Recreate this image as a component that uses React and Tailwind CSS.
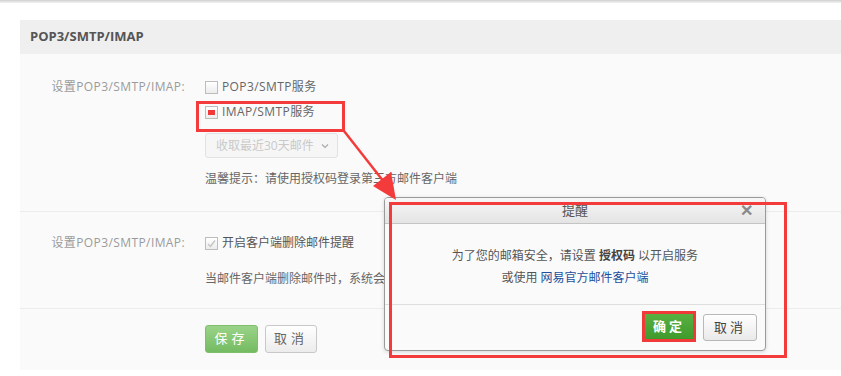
import React from 'react';

function Checkbox({ state }) {
  return (
    <span className="relative inline-flex h-[13px] w-[13px] shrink-0 items-center justify-center border border-[#bdbdbd] bg-gradient-to-b from-[#ffffff] to-[#ececec]">
      {state === 'red' && <span className="h-[5px] w-[7px] bg-[#f03a3a]" />}
      {state === 'check' && (
        <svg width="9" height="9" viewBox="0 0 9 9">
          <path d="M1 5 L3.5 7.5 L8 1.5" fill="none" stroke="#c4c4c4" strokeWidth="1.4" />
        </svg>
      )}
    </span>
  );
}

export default function App() {
  return (
    <div className="relative h-[376px] w-[841px] overflow-hidden bg-white font-['Open_Sans','Noto_Sans_CJK_SC',sans-serif] text-[12px]">
      <div className="h-[3px] bg-gradient-to-b from-[#cfcfcf] to-[#f4f4f4]" />

      {/* panel */}
      <div className="ml-[20px] mt-[17px] bg-[#fafafa]">
        <div className="flex h-[34px] items-center bg-[#efefef] pl-[10px] text-[13px] font-bold text-[#555]">
          POP3/SMTP/IMAP
        </div>

        <div className="flex pb-[22px] pt-[23px]">
          <div className="w-[165px] text-right leading-[20px] tracking-[0.4px] text-[#9a9a9a]">设置POP3/SMTP/IMAP:</div>
          <div className="ml-[20px] flex flex-col">
            <div className="flex h-[20px] items-center gap-[4px] text-[#666]">
              <Checkbox />
              <span className="tracking-[0.4px]">POP3/SMTP服务</span>
            </div>
            <div className="mt-[5px] flex h-[20px] items-center gap-[4px] text-[#666]">
              <Checkbox state="red" />
              <span className="tracking-[0.4px]">IMAP/SMTP服务</span>
            </div>
            <div className="mt-[11px] flex h-[25px] w-[133px] items-center justify-between rounded-[3px] border border-[#e2e2e2] bg-[#f6f6f6] pl-[10px] pr-[8px] text-[#c9c9c9]">
              <span>收取最近30天邮件</span>
              <svg width="8" height="6" viewBox="0 0 8 6">
                <path d="M1 1.5 L4 4.5 L7 1.5" fill="none" stroke="#aaa" strokeWidth="1.2" />
              </svg>
            </div>
            <div className="mt-[11px] leading-[20px] text-[#666]">温馨提示：请使用授权码登录第三方邮件客户端</div>
          </div>
        </div>

        <div className="h-px bg-[#ececec]" />

        <div className="flex pb-[19px] pt-[21px]">
          <div className="w-[165px] text-right leading-[20px] tracking-[0.4px] text-[#9a9a9a]">设置POP3/SMTP/IMAP:</div>
          <div className="ml-[20px] flex flex-col">
            <div className="flex h-[20px] items-center gap-[4px] text-[#555]">
              <Checkbox state="check" />
              <span>开启客户端删除邮件提醒</span>
            </div>
            <div className="mt-[16px] leading-[20px] text-[#666]">当邮件客户端删除邮件时，系统会发送邮件提醒</div>
          </div>
        </div>

        <div className="h-px bg-[#ececec]" />

        <div className="flex gap-[7px] pb-[17px] pl-[185px] pt-[16px]">
          <button className="h-[28px] w-[53px] rounded-[3px] border border-[#7fbf6c] bg-gradient-to-b from-[#9ad388] to-[#74bb62] text-[13px] tracking-[4px] text-white">
            保存
          </button>
          <button className="h-[28px] w-[52px] rounded-[3px] border border-[#c8c8c8] bg-gradient-to-b from-[#ffffff] to-[#ececec] text-[13px] tracking-[4px] text-[#666]">
            取消
          </button>
        </div>
      </div>

      {/* dialog */}
      <div className="absolute left-[384px] top-[197px] flex h-[154px] w-[382px] flex-col overflow-hidden rounded-[4px] border border-[#9a9a9a] bg-[#fafafa] shadow-[0_1px_4px_rgba(0,0,0,0.15)]">
        <div className="relative flex h-[26px] shrink-0 items-center justify-center border-b border-[#c4c4c4] bg-gradient-to-b from-[#f7f7f7] to-[#e4e4e4] text-[13px] text-[#555]">
          提醒
          <span className="absolute right-[12px] top-[4px] text-[16px] font-bold leading-[16px] text-[#8a8a8a]">✕</span>
        </div>
        <div className="flex h-[80px] shrink-0 flex-col items-center justify-center pt-[5px] leading-[22px] text-[#555]">
          <div>
            为了您的邮箱安全，请设置 <b className="font-bold text-[#444]">授权码</b> 以开启服务
          </div>
          <div>
            或使用 <span className="text-[#1d4f9c]">网易官方邮件客户端</span>
          </div>
        </div>
        <div className="h-px bg-[#dedede]" />
        <div className="flex flex-1 items-start justify-end gap-[10px] pr-[8px] pt-[9px]">
          <button className="h-[25px] w-[48px] bg-gradient-to-b from-[#58b040] to-[#3f9a2c] text-[13px] font-bold tracking-[3px] text-white outline outline-[3px] outline-offset-[0px] outline-[#f03a3a]">
            确定
          </button>
          <button className="h-[27px] w-[54px] rounded-[3px] border border-[#b8b8b8] bg-gradient-to-b from-[#ffffff] to-[#e9e9e9] text-[13px] tracking-[3px] text-[#444]">
            取消
          </button>
        </div>
      </div>

      {/* annotations */}
      <div className="pointer-events-none absolute left-[196px] top-[101px] h-[31px] w-[149px] border-[3px] border-[#f43b3b]" />
      <div className="pointer-events-none absolute left-[389px] top-[202px] h-[156px] w-[398px] border-[3px] border-[#f43b3b]" />
      <svg className="pointer-events-none absolute left-0 top-0" width="841" height="376">
        <line x1="344" y1="131" x2="384" y2="182" stroke="#f43b3b" strokeWidth="2.5" />
        <polygon points="396,200 373,186 391,172" fill="#f43b3b" />
      </svg>
    </div>
  );
}
